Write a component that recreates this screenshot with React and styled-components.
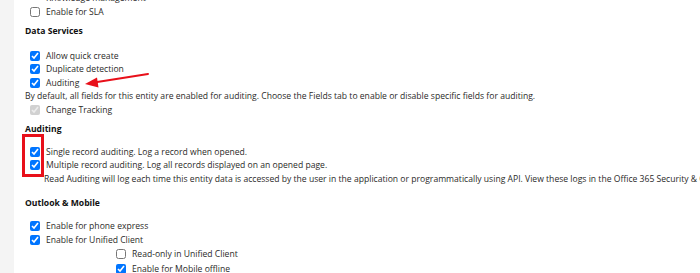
import React from 'react'
import styled, { createGlobalStyle } from 'styled-components'

const GlobalStyle = createGlobalStyle`
  html, body {
    margin: 0;
    padding: 0;
    background: #fff;
  }
  body {
    font-family: 'Open Sans', 'Noto Sans', sans-serif;
    overflow: hidden;
  }
`

const Page = styled.div`
  position: relative;
  display: flex;
  width: 700px;
  height: 273px;
  overflow: hidden;
`

const Rail = styled.div`
  flex: none;
  width: 14px;
  background: #f4f4f4;
`

const Content = styled.div`
  flex: 1;
  padding-left: 11px;
  margin-top: -8px;
  font-size: 8.6px;
  line-height: 13.5px;
  color: #2b2a29;
  white-space: nowrap;
`

const Heading = styled.div`
  font-weight: 700;
  color: #111;
  margin: ${({ $top }) => $top}px 0 ${({ $bottom }) => $bottom}px;
`

const Item = styled.label`
  display: flex;
  align-items: flex-start;
  gap: 6px;
  height: ${({ $h }) => $h || 13.5}px;
  padding-left: ${({ $indent }) => $indent || 5}px;
`

const Box = styled.input.attrs({ type: 'checkbox', readOnly: true })`
  flex: none;
  width: 10px;
  height: 10px;
  margin: 1px 0 0;
`

const Note = styled.div`
  padding-left: ${({ $indent }) => $indent || 0}px;
`

const Group = styled.div``

const RedBox = styled.div`
  position: absolute;
  left: 22px;
  top: 134px;
  width: 16px;
  height: 37px;
  border: 3px solid #e8101a;
`

const Arrow = styled.svg`
  position: absolute;
  left: 80px;
  top: 69px;
`

function Check ({ label, checked, disabled, indent, h }) {
  return (
    <Item $indent={indent} $h={h}>
      <Box checked={!!checked} disabled={disabled} onChange={() => {}} />
      <span>{label}</span>
    </Item>
  )
}

export default function App () {
  return (
    <>
      <GlobalStyle />
      <Page>
        <Rail />
        <Content>
          <Group>
            <Note $indent={21}>Knowledge management</Note>
            <Check label='Enable for SLA' />
          </Group>

          <Heading $top={6} $bottom={11}>Data Services</Heading>
          <Group>
            <Check label='Allow quick create' checked />
            <Check label='Duplicate detection' checked />
            <Check label='Auditing' checked />
            <Note>By default, all fields for this entity are enabled for auditing. Choose the Fields tab to enable or disable specific fields for auditing.</Note>
            <Check label='Change Tracking' checked disabled />
          </Group>

          <Heading $top={6} $bottom={9}>Auditing</Heading>
          <Group>
            <Check label='Single record auditing. Log a record when opened.' checked />
            <Check label='Multiple record auditing. Log all records displayed on an opened page.' checked h={14} />
            <Note $indent={19}>Read Auditing will log each time this entity data is accessed by the user in the application or programmatically using API. View these logs in the Office 365 Security &amp; Compliance Center.</Note>
          </Group>

          <Heading $top={10} $bottom={10}>Outlook &amp; Mobile</Heading>
          <Group>
            <Check label='Enable for phone express' checked h={14} />
            <Check label='Enable for Unified Client' checked h={14} />
            <Check label='Read-only in Unified Client' indent={91} h={14.5} />
            <Check label='Enable for Mobile offline' checked indent={91} h={14.5} />
          </Group>
        </Content>

        <RedBox />
        <Arrow width='72' height='22' viewBox='0 0 72 22'>
          <line x1='68' y1='5' x2='14' y2='13.5' stroke='#e8101a' strokeWidth='2' strokeLinecap='round' />
          <polygon points='5,15 17,8.5 18.5,18.5' fill='#e8101a' />
        </Arrow>
      </Page>
    </>
  )
}
